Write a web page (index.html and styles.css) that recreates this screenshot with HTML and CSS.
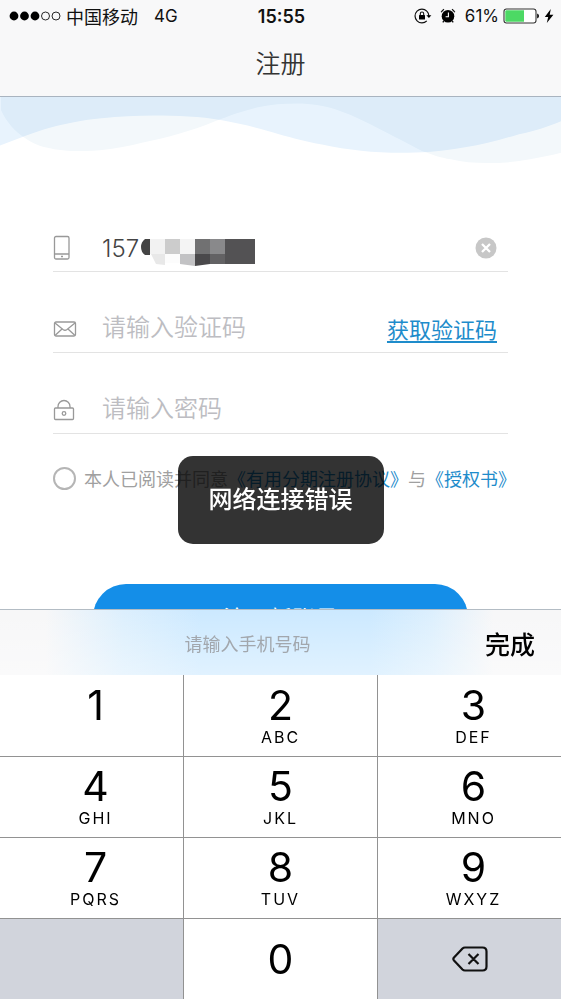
FILE: index.html
```
<!DOCTYPE html>
<html lang="zh-CN">
<head>
<meta charset="utf-8">
<meta name="viewport" content="width=device-width, initial-scale=1">
<title>注册</title>
<link rel="stylesheet" href="styles.css">
</head>
<body>
<header class="top">
  <div class="status">
    <div class="status-left">
      <svg class="signal" width="52" height="10" viewBox="0 0 52 10" aria-hidden="true">
        <circle cx="5" cy="5" r="4.4"/><circle cx="15.5" cy="5" r="4.4"/><circle cx="26" cy="5" r="4.4"/>
        <g fill="none" stroke="#111" stroke-width="0.9"><circle cx="36.500" cy="5" r="4"/><circle cx="47" cy="5" r="4"/></g>
      </svg>
      <span class="carrier">中国移动</span>
      <span>4G</span>
    </div>
    <div class="time">15:55</div>
    <div class="status-right">
      <svg class="rotation" width="18" height="16" viewBox="0 0 18 16" aria-hidden="true">
        <path d="M12.800 3.100A6.900 6.900 0 1 0 12.800 12.900M12.800 3.100Q14.800 5 14.900 8" fill="none" stroke="#111" stroke-width="1.200"/>
        <path d="M12.400 7.200h5l-2.500 2.900z"/>
        <rect x="5" y="7" width="6" height="4.600" rx=".5"/>
        <path d="M6.300 7.200V5.700a1.700 1.700 0 0 1 3.400 0v1.500" fill="none" stroke="#111" stroke-width="1.100"/>
      </svg>
      <svg class="alarm" width="16" height="16" viewBox="0 0 16 16" aria-hidden="true">
        <circle cx="8" cy="8.300" r="6.300"/>
        <path d="M1.200 4.200A8 8 0 0 1 4 1.200M12 1.200a8 8 0 0 1 2.800 3M3.800 13l-1 1.300M12.200 13l1 1.300" fill="none" stroke="#111" stroke-width="1.300"/>
        <path d="M8.400 4.500v4.200H5.600" fill="none" stroke="#fff" stroke-width="1.100"/>
      </svg>
      <span>61%</span>
      <svg class="battery" width="36" height="16" viewBox="0 0 36 16" aria-hidden="true">
        <rect x="1" y="1" width="32" height="14" rx="2.500" fill="#fff" stroke="#333" stroke-width="1.100"/>
        <path d="M3.500 2.200H21v11.600H3.500q-1.200 0-1.200-1.200V3.400q0-1.200 1.200-1.200z" fill="#4cd964"/>
        <path d="M34.200 5.500q1.800.7 1.800 2.500t-1.800 2.500z"/>
      </svg>
      <svg class="bolt" width="10" height="14" viewBox="0 0 10 14" aria-hidden="true">
        <path d="M6.800 0 .8 8h3.400L2.800 14 9.400 5.800H5.700z"/>
      </svg>
    </div>
  </div>
  <h1 class="title">注册</h1>
</header>

<main>
  <svg class="waves" viewBox="0 0 561 72" preserveAspectRatio="none" aria-hidden="true">
    <path class="wave-a" d="M0 0H561V26C548 32 536 36 519 40C500 46 484 51 465 54C440 59 420 60 401 60C374 60 348 57 322 51C306 48 293 44 279 40C258 33 242 29 222 25C200 21 177 20 154 20C128 20 102 22 79 26C58 30 42 35 27 41L0 52Z"/>
    <path class="wave-b" d="M1 0H561V60C550 63 541 65 530 67C516 70 502 71 487 71C474 71 462 70 451 67C440 65 432 62 422 58C406 49 394 42 379 34C366 27 354 20 340 15C326 9 311 7 297 7C283 7 271 8 258 11C242 15 230 20 215 26C190 37 168 43 143 49C124 54 104 58 86 58C73 58 61 58 50 55C40 53 33 50 25 44C15 37 7 28 1 14Z"/>
  </svg>

  <form class="form">
    <div class="field">
      <svg class="icon" width="24" height="26" viewBox="0 0 24 26" aria-hidden="true">
        <rect x="1.500" y="1.500" width="14.500" height="22.500" rx="1.500"/><path d="M1.500 19H16M8 21.500h2"/>
      </svg>
      <div class="entry">
        <input class="input phone" type="tel" value="157" aria-label="手机号码">
        <svg class="mosaic" width="116" height="30" viewBox="0 0 116 30" aria-hidden="true">
          <path d="M10 2H5Q1 5 1 10T5 18H10z" fill="#444"/>
          <path d="M10 2h15v15H10z" fill="#f2f2f2"/><path d="M25 2h15v15H25z" fill="#ccc"/><path d="M40 2h15v15H40z" fill="#f4f4f4"/>
          <path d="M55 2h15v15H55z" fill="#717172"/><path d="M70 2h15v15H70z" fill="#89898b"/><path d="M85 2h30v25H85z" fill="#535254"/>
          <path d="M11 17h14v11l-9-1z" fill="#e8e8e8"/><path d="M25 17h15v9H25z" fill="#fcfcfc"/><path d="M40 17h15v12l-15-2z" fill="#c2c2c4"/>
          <path d="M55 17h15v10l-15 2z" fill="#4a494b"/><path d="M70 17h15v10H70z" fill="#636264"/>
        </svg>
      </div>
      <button class="clear" type="button" aria-label="清除">
        <svg width="22" height="22" viewBox="0 0 22 22" aria-hidden="true"><circle cx="11" cy="11" r="10.500" fill="#c7c7c7"/><path d="M7 7l8 8M15 7l-8 8" stroke="#fff" stroke-width="2.300"/></svg>
      </button>
    </div>
    <div class="field">
      <svg class="icon" width="24" height="26" viewBox="0 0 24 26" aria-hidden="true">
        <rect x="1.500" y="6" width="21" height="14" rx="1.500"/><path d="M2 7l8 6.500q2 1.500 4 0L22 7M2 19.500l7-6.500M22 19.500l-7-6.500"/>
      </svg>
      <input class="input" id="code" type="text" placeholder="请输入验证码" aria-label="验证码">
      <a class="get-code" href="#code">获取验证码</a>
    </div>
    <div class="field">
      <svg class="icon" width="24" height="26" viewBox="0 0 24 26" aria-hidden="true">
        <rect x="1.500" y="11" width="19" height="11.500" rx="1"/><path d="M5 11V9.500a6 6 0 0 1 12 0V11"/><circle cx="11" cy="16.500" r="1.800"/>
      </svg>
      <input class="input" type="password" placeholder="请输入密码" aria-label="密码">
    </div>
    <div class="agree">
      <input class="check" id="agree" type="checkbox">
      <div class="terms"><label for="agree">本人已阅读并同意</label><a href="#terms">《有用分期注册协议》</a>与<a href="#license">《授权书》</a></div>
    </div>
    <button class="submit" type="submit">注册新账号</button>
  </form>
</main>

<div class="toast" role="alert">网络连接错误</div>

<section class="keyboard" aria-label="数字键盘">
  <div class="bar">
    <span class="hint">请输入手机号码</span>
    <button class="done" type="button">完成</button>
  </div>
  <div class="keys">
    <button class="key" type="button"><span class="num">1</span></button>
    <button class="key" type="button"><span class="num">2</span><span class="abc">ABC</span></button>
    <button class="key" type="button"><span class="num">3</span><span class="abc">DEF</span></button>
    <button class="key" type="button"><span class="num">4</span><span class="abc">GHI</span></button>
    <button class="key" type="button"><span class="num">5</span><span class="abc">JKL</span></button>
    <button class="key" type="button"><span class="num">6</span><span class="abc">MNO</span></button>
    <button class="key" type="button"><span class="num">7</span><span class="abc">PQRS</span></button>
    <button class="key" type="button"><span class="num">8</span><span class="abc">TUV</span></button>
    <button class="key" type="button"><span class="num">9</span><span class="abc">WXYZ</span></button>
    <div class="key gray"></div>
    <button class="key zero" type="button"><span class="num">0</span></button>
    <button class="key gray zero" type="button" aria-label="删除">
      <svg width="36" height="26" viewBox="0 0 36 26" aria-hidden="true"><path d="M13 1.500h17.500q4 0 4 4v15q0 4-4 4H13q-1.500 0-2.500-1L2 14.500q-1.300-1.500 0-3L10.500 2.500q1-1 2.500-1zM16.500 8l10 10M26.500 8l-10 10" fill="none" stroke="#111" stroke-width="2.200" stroke-linejoin="round"/></svg>
    </button>
  </div>
</section>
</body>
</html>
```

FILE: styles.css
```
* {
  box-sizing: border-box;
}

body {
  margin: 0;
  min-height: 100vh;
  overflow: hidden;
  background: #fff;
  color: #111;
  font-family: Inter, "Noto Sans CJK SC", sans-serif;
}

button,
input {
  margin: 0;
  padding: 0;
  border: 0;
  background: none;
  color: inherit;
  font: inherit;
}

svg {
  display: block;
  flex: none;
}

a {
  color: #1e8ccb;
  text-decoration: none;
}

.top {
  background: #f8f8f9;
  border-bottom: 1px solid #a9b4c0;
}

.status {
  display: grid;
  grid-template-columns: 1fr auto 1fr;
  align-items: center;
  height: 32px;
  padding: 0 7px 0 9px;
  font-size: 17px;
}

.status-left,
.status-right {
  display: flex;
  align-items: center;
}

.status-right {
  justify-content: flex-end;
}

.carrier {
  margin: 0 16px 0 5px;
  font-size: 18px;
}

.time {
  font-size: 18px;
  font-weight: 600;
}

.alarm {
  margin: 0 9px 0 8px;
}

.battery {
  margin: 0 5px 0 4px;
}

.title {
  margin: 0;
  height: 64px;
  color: #333;
  font-size: 25px;
  font-weight: 350;
  line-height: 64px;
  text-align: center;
}

.waves {
  width: 100%;
  height: 67px;
  isolation: isolate;
}

.wave-a {
  fill: #e8f3fd;
}

.wave-b {
  fill: #f3f8fb;
  mix-blend-mode: multiply;
}

.form {
  padding: 27px 53px 0;
}

.field {
  display: flex;
  align-items: center;
  height: 81px;
  padding: 34px 11px 0 0;
  border-bottom: 1px solid #e3e3e3;
}

.icon {
  margin-right: 25px;
  fill: none;
  stroke: #999;
  stroke-width: 1.3;
}

.entry {
  position: relative;
  display: flex;
  flex: 1;
  min-width: 0;
}

.input {
  flex: 1;
  min-width: 0;
  height: 36px;
  padding-bottom: 3px;
  outline: 0;
  color: #444;
  font-size: 24px;
  font-weight: 350;
}

.phone {
  padding-bottom: 0;
  font-weight: 300;
}

.input::placeholder {
  color: #bdbdc2;
  opacity: 1;
}

.mosaic {
  position: absolute;
  left: 38px;
  top: 7px;
}

.get-code {
  padding-bottom: 3px;
  font-size: 22px;
  text-decoration: underline;
  text-decoration-thickness: 2px;
  text-underline-offset: 3px;
}

.agree {
  display: flex;
  align-items: center;
  gap: 8px;
  height: 88px;
  color: #a0a0a0;
  font-size: 18px;
}

.check {
  flex: none;
  width: 23px;
  height: 23px;
  border: 2px solid #b5b5b5;
  border-radius: 50%;
  appearance: none;
}

.terms {
  white-space: nowrap;
}

.submit {
  display: block;
  width: calc(100% - 80px);
  height: 66px;
  margin: 62px auto 0;
  border-radius: 33px;
  background: #148ee8;
  color: #fff;
  font-size: 23px;
}

.toast {
  position: fixed;
  top: 50%;
  left: 50%;
  transform: translate(-50%, -50%);
  padding: 26px 31px;
  border-radius: 15px;
  background: rgba(0, 0, 0, 0.8);
  color: #fff;
  font-size: 24px;
  font-weight: 500;
  line-height: 36px;
  white-space: nowrap;
}

.keyboard {
  position: fixed;
  right: 0;
  bottom: 0;
  left: 0;
}

.bar {
  display: grid;
  grid-template-columns: 1fr auto;
  align-items: center;
  height: 66px;
  padding: 0 26px 0 10px;
  border-top: 1px solid #b3bcc4;
  background:
    linear-gradient(to bottom, transparent, rgba(255, 255, 255, 0.4)),
    linear-gradient(to right, #f7f7f8 8%, #dceffd 22%, #cce9ff 36%, #cce9ff 66%, #dceffd 77%, #f7f7f8 88%);
}

.hint {
  color: #a2a7ad;
  font-size: 18px;
  text-align: center;
}

.done {
  color: #000;
  font-size: 25px;
  font-weight: 500;
}

.keys {
  display: grid;
  grid-template-columns: 183fr 195fr 183fr;
  grid-auto-rows: 81px;
}

.key {
  display: flex;
  flex-direction: column;
  align-items: center;
  justify-content: flex-start;
  padding-top: 8px;
  background: #fff;
  color: #000;
}

.key:nth-child(n + 4) {
  padding-top: 7px;
  border-top: 1px solid #929292;
}

.key:nth-child(3n + 1),
.key:nth-child(3n) {
  padding-left: 8px;
}

.key:nth-child(3n + 2) {
  border-right: 1px solid #929292;
  border-left: 1px solid #929292;
}

.num {
  font-size: 41px;
  line-height: 45px;
}

.abc {
  font-size: 16px;
  line-height: 18px;
  letter-spacing: 2px;
}

.key.gray {
  background: #d1d4dc;
}

.key.zero {
  justify-content: center;
  padding: 0;
}
```
